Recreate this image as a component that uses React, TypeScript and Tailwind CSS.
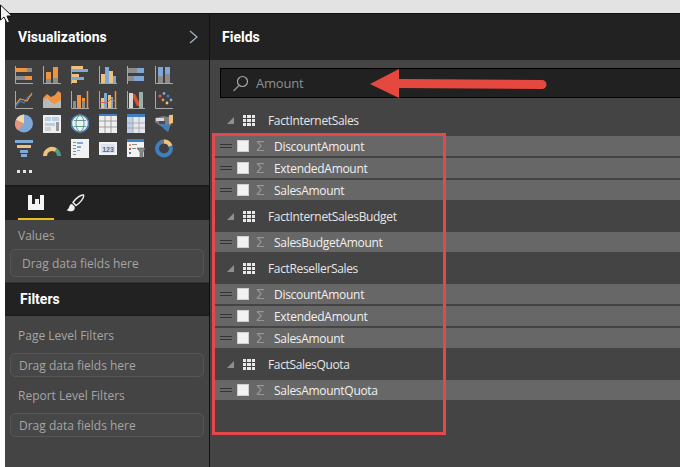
const OR = "#ee9440";
const BL = "#7ea8d6";
const TN = "#eec27c";
const GR = "#8c8c8c";
const AX = "#a8a8a8";
const DB = "#3f7fbf";

const Axes = () => <path d="M0.5 1V18.5H18" fill="none" stroke={AX} strokeWidth="1" />;
const R = (x: number, y: number, w: number, h: number, c: string) => <rect x={x} y={y} width={w} height={h} fill={c} />;

const vizIcons = [
  <><path d="M0.5 1V18.5H18" fill="none" stroke={AX} />{R(1, 3, 11, 4, OR)}{R(12, 3, 5, 4, GR)}{R(1, 11, 9, 4, GR)}{R(10, 11, 7, 4, OR)}</>,
  <><Axes />{R(3, 7, 5, 7, OR)}{R(3, 14, 5, 4, GR)}{R(10, 2, 5, 11, OR)}{R(10, 13, 5, 5, GR)}</>,
  <><path d="M0.5 1V19" stroke={AX} />{R(1, 1, 11, 3, TN)}{R(1, 4, 16, 3, BL)}{R(1, 9, 7, 3, TN)}{R(1, 12, 12, 3, BL)}{R(1, 15, 5, 3, TN)}</>,
  <><Axes />{R(2, 9, 4, 9, TN)}{R(6, 2, 4, 16, BL)}{R(10, 6, 4, 12, TN)}{R(14, 11, 3, 7, BL)}</>,
  <><path d="M0.5 1V19" stroke={AX} />{R(1, 3, 9, 5, GR)}{R(10, 3, 7, 5, BL)}{R(1, 11, 6, 5, GR)}{R(7, 11, 10, 5, BL)}</>,
  <><Axes />{R(3, 2, 5, 9, BL)}{R(3, 11, 5, 7, GR)}{R(10, 2, 5, 7, BL)}{R(10, 9, 5, 9, GR)}</>,
  <><Axes /><path d="M1 16L5 11L9 13L13 7L17 5" fill="none" stroke={DB} strokeWidth="1.3" /><path d="M1 14L5 9L9 10L12 11L17 3" fill="none" stroke={OR} strokeWidth="1.2" /></>,
  <><path d="M0 18V8L4 4L8 7L12 5L15 1L18 3V18Z" fill={OR} /><path d="M0 18V11L4 8L8 12L12 14L18 10V18Z" fill="#b9b9b9" /></>,
  <><Axes />{R(2, 11, 3, 7, GR)}{R(6, 5, 4, 13, OR)}{R(11, 11, 3, 7, GR)}{R(11, 8, 3, 3, OR)}<path d="M16.5 1V18" stroke={OR} strokeWidth="1.5" /></>,
  <><Axes />{R(2, 8, 3, 10, TN)}{R(5, 3, 3, 15, BL)}{R(9, 5, 3, 13, TN)}{R(12, 7, 2, 11, BL)}<path d="M1 12L8 13L12 9L16 11" fill="none" stroke="#e0574f" /><path d="M16.5 1V18" stroke={OR} strokeWidth="1.5" /></>,
  <><Axes />{R(2, 3, 4, 15, "#d8d8d8")}{R(12, 2, 4, 16, "#9bb0a8")}<path d="M6 4H8L12 12V16H10L6 8Z" fill="#d9512f" /></>,
  <><Axes /><circle cx="5" cy="6" r="1.6" fill="#d65a4e" /><circle cx="9" cy="3.5" r="1.4" fill={BL} /><circle cx="13" cy="6" r="1.5" fill={DB} /><circle cx="8" cy="10" r="1.4" fill={OR} /><circle cx="12" cy="13" r="1.4" fill={TN} /><circle cx="16" cy="10" r="1.4" fill={BL} /></>,
  <><circle cx="9" cy="9.5" r="9" fill={BL} /><path d="M9 9.5V0.5A9 9 0 0 0 1 6Z" fill="#f3d9a4" /><path d="M9 9.5L1 6A9 9 0 0 0 3 16.5Z" fill="#e6937f" /></>,
  <>{R(0, 1, 18, 18, "#eeeeee")}{R(2, 3, 6, 4, "#b9cde3")}{R(9, 3, 7, 4, "#b9cde3")}{R(2, 9, 10, 3, "#b9cde3")}{R(13, 8, 3, 9, "#9a9a9a")}{R(2, 13, 6, 4, "#cfcfcf")}</>,
  <><circle cx="9" cy="9.5" r="9" fill="#f0f0f0" /><circle cx="9" cy="9.5" r="8.5" fill="none" stroke={DB} strokeWidth="1.4" /><path d="M3 6.5H15M3 12.5H15" stroke="#5f9a8a" strokeWidth="1.2" /><ellipse cx="9" cy="9.5" rx="4" ry="8" fill="none" stroke="#5f9a8a" /></>,
  <>{R(0, 0, 18, 19, "#eeeeee")}{R(0, 0, 18, 2, DB)}<path d="M6 2V19M12 2V19M0 7H18M0 13H18" stroke="#8d8d8d" strokeWidth="0.8" /></>,
  <>{R(0, 0, 18, 19, "#e4e8ee")}{R(0, 0, 18, 3, DB)}{R(0, 3, 6, 16, "#bcd0e6")}<path d="M6 3V19M12 3V19M0 9H18M0 14H18" stroke="#9a9a9a" strokeWidth="0.7" /></>,
  <><path d="M0 4L8 2L13 3L18 0V8L15 12L13 18L9 14L4 11L0 8Z" fill="#7d7d7d" />{R(1, 4, 8, 3, "#d8d8d8")}<path d="M14 1H18V9L14 10Z" fill={TN} /><path d="M5 10L14 11L13 18L9 15Z" fill={DB} />{R(4, 7, 6, 3, "#3d4f66")}</>,
  <>{R(0, 1, 18, 3, BL)}{R(2, 6, 14, 3, TN)}{R(5, 11, 8, 3, BL)}{R(6, 15, 6, 3, BL)}</>,
  <><path d="M2 17A7 7 0 0 1 13 11.2" fill="none" stroke={TN} strokeWidth="4" /><path d="M13 11.2A7 7 0 0 1 16 17" fill="none" stroke="#4f9c8a" strokeWidth="4" /></>,
  <>{R(0, 0, 18, 19, "#f2f2f2")}{R(2, 3, 3, 1, GR)}{R(2, 6, 3, 1, GR)}{R(2, 9, 3, 1, GR)}{R(2, 12, 3, 1, GR)}{R(2, 15, 3, 1, GR)}{R(6, 3, 6, 2, BL)}{R(6, 7, 4, 2, BL)}{R(6, 11, 3, 1, BL)}</>,
  <>{R(0, 3, 18, 13, "#f2f2f2")}{R(2, 5, 14, 9, "#dbe3ec")}<text x="9" y="12.5" textAnchor="middle" fontSize="7" fontWeight="700" fontFamily="Liberation Sans, sans-serif" fill="#3f6f9f">123</text></>,
  <>{R(0, 0, 17, 18, "#f2f2f2")}{R(0, 0, 17, 3, DB)}{R(2, 5, 2, 2, OR)}{R(2, 9, 2, 2, "#d9512f")}{R(2, 13, 2, 2, DB)}{R(5, 5, 5, 1, GR)}{R(5, 9, 4, 1, GR)}<path d="M10 9H19L16 13V18L13 19V13Z" fill="#8a8a8a" stroke="#444" strokeWidth="0.5" /></>,
  <><circle cx="9" cy="9.5" r="7" fill="none" stroke={DB} strokeWidth="4" /><path d="M9 2.5A7 7 0 0 1 15.5 7" fill="none" stroke={TN} strokeWidth="4" /><path d="M9 2.5A7 7 0 0 0 6 3.2" fill="none" stroke="#777" strokeWidth="4" /></>,
];

const SectionHead = ({ children }: { children: string }) => (
  <div className="h-[33px] bg-[#222222] flex items-center pl-[15px] border-y border-[#1b1b1b] text-white text-[14px] font-bold font-['Roboto',sans-serif]">
    {children}
  </div>
);

const DropBox = ({ h, pl }: { h: string; pl: string }) => (
  <div className={`mx-[5px] rounded-[5px] border border-[#565656] bg-[#474747] flex items-center pt-[1px] text-[12px] text-[#a5a5a5] ${h} ${pl}`}>
    Drag data fields here
  </div>
);

const TableHead = ({ name }: { name: string }) => (
  <div className="h-[30px] pb-[2px] flex items-center">
    <svg width="7" height="7" viewBox="0 0 7 7" className="ml-[17px]"><path d="M7 0V7H0Z" fill="#8f8f8f" /></svg>
    <div className="ml-[9px] w-[12px] h-[11px] grid grid-cols-3 gap-[1px]">
      {Array.from({ length: 9 }).map((_, i) => <div key={i} className="bg-[#e8e8e8]" />)}
    </div>
    <span className="ml-[13px] pt-[1px] text-[12px] tracking-[-0.35px] text-[#e6e6e6]">{name}</span>
  </div>
);

const FieldRow = ({ name }: { name: string }) => (
  <div className="h-[20px] mb-[2px] ml-[5px] bg-[#676767] flex items-center">
    <div className="ml-[5px] w-[12px] flex flex-col gap-[2px]">
      <div className="h-px bg-[#333333]" />
      <div className="h-px bg-[#333333]" />
    </div>
    <div className="ml-[5px] w-[12px] h-[12px] bg-[#f2f2f2] border border-[#cfcfcf]" />
    <span className="ml-[7px] w-[11px] text-[14px] leading-none text-[#979797] font-['Liberation_Sans',sans-serif]">Σ</span>
    <span className="ml-[7px] pt-[1px] text-[12px] tracking-[-0.3px] text-[#f0f0f0]">{name}</span>
  </div>
);

const groups = [
  { name: "FactInternetSales", fields: ["DiscountAmount", "ExtendedAmount", "SalesAmount"] },
  { name: "FactInternetSalesBudget", fields: ["SalesBudgetAmount"] },
  { name: "FactResellerSales", fields: ["DiscountAmount", "ExtendedAmount", "SalesAmount"] },
  { name: "FactSalesQuota", fields: ["SalesAmountQuota"] },
];

export default function App() {
  return (
    <div className="relative w-[680px] h-[467px] overflow-hidden bg-white font-['Open_Sans',sans-serif]">
      <div className="h-[13px] bg-[#e3e3e3]" />
      <div className="flex h-[454px]">
        <div className="w-[5px] bg-white" />

        <aside className="w-[204px] bg-[#444444] border-t border-[#111111]">
          <div className="h-[46px] bg-[#222222] flex items-center justify-between pl-[13px] pr-[11px] text-white text-[14px] font-bold font-['Roboto',sans-serif]">
            <span>Visualizations</span>
            <svg width="9" height="14" viewBox="0 0 9 14"><path d="M1 1L8 7L1 13" fill="none" stroke="#9fb0c0" strokeWidth="1.3" /></svg>
          </div>
          <div className="h-[125px] bg-[#3f3f3f] pl-[10px] pt-[5px]">
            <div className="grid grid-cols-[repeat(6,18px)] auto-rows-[19px] gap-x-[10px] gap-y-[5.5px]">
              {vizIcons.map((icon, i) => (
                <svg key={i} width="18" height="19" viewBox="0 0 18 19">{icon}</svg>
              ))}
            </div>
            <div className="flex gap-[3px] mt-[12px] ml-[2px]">
              <div className="w-[3px] h-[3px] bg-[#e4e4e4]" />
              <div className="w-[3px] h-[3px] bg-[#e4e4e4]" />
              <div className="w-[3px] h-[3px] bg-[#e4e4e4]" />
            </div>
          </div>
          <div className="h-[2px] bg-[#1b1b1b]" />
          <div className="h-[33px] bg-[#222222] flex items-center pl-[13px]">
            <div className="w-[36px] h-[33px] flex items-center justify-center border-b-2 border-[#e8c020]">
              <svg width="16" height="15" viewBox="0 0 16 15"><path d="M0 0H4V9H7V4H11V9H12V0H16V15H0Z" fill="#f5f5f5" /></svg>
            </div>
            <svg width="19" height="19" viewBox="0 0 19 19" className="ml-[12px]">
              <path d="M17.5 1C15 0.5 10 4 7 8.5L10 11.5C14 9 18.5 4 17.5 1Z" fill="none" stroke="#f2f2f2" strokeWidth="1.4" />
              <path d="M6 10C2.5 10 4 15 0.5 16C4 18.5 10 17.5 8.5 12.5Z" fill="#f2f2f2" />
            </svg>
          </div>
          <div className="h-[63px] border-b border-[#333333]">
            <div className="pl-[13px] pt-[7px] h-[29px] text-[12px] text-[#a5a5a5]">Values</div>
            <DropBox h="h-[28px]" pl="pl-[11px]" />
          </div>
          <SectionHead>Filters</SectionHead>
          <div className="pl-[13px] pt-[11px] h-[37px] text-[12px] text-[#a5a5a5]">Page Level Filters</div>
          <DropBox h="h-[24px]" pl="pl-[8px]" />
          <div className="pl-[13px] pt-[10px] h-[36px] text-[12px] text-[#a5a5a5]">Report Level Filters</div>
          <DropBox h="h-[24px]" pl="pl-[8px]" />
        </aside>

        <div className="w-px bg-[#111111]" />

        <main className="flex-1 bg-[#444444] border-t border-[#111111]">
          <div className="h-[46px] bg-[#222222] flex items-center pl-[12px] text-white text-[14px] font-bold font-['Roboto',sans-serif]">
            Fields
          </div>
          <div className="h-[46px] pt-[8px] pl-[10px]">
            <div className="h-[30px] bg-[#212121] border border-black border-r-0 flex items-center pl-[11px]">
              <svg width="17" height="17" viewBox="0 0 17 17">
                <circle cx="10.5" cy="6.5" r="5" fill="none" stroke="#a8a8a8" strokeWidth="1.2" />
                <path d="M7 10.5L1.5 16" stroke="#8a8a8a" strokeWidth="1.6" />
              </svg>
              <span className="ml-[7px] pt-[2px] text-[13px] tracking-[-0.2px] text-[#8f8f8f]">Amount</span>
            </div>
          </div>
          <div>
            {groups.map((g) => (
              <div key={g.name}>
                <TableHead name={g.name} />
                {g.fields.map((f) => <FieldRow key={f} name={f} />)}
              </div>
            ))}
          </div>
        </main>
      </div>

      {/* annotations drawn on top of the screenshot */}
      <div className="absolute left-[212px] top-[133px] w-[234px] h-[302px] border-[3px] border-[#e5484a]" />
      <svg className="absolute left-[368px] top-[66px]" width="182" height="36" viewBox="0 0 182 36">
        <path d="M2 18L31 3V13L174 14A4.5 4.5 0 0 1 174 23L31 22V32Z" fill="#e5483f" />
      </svg>
      <svg className="absolute left-0 top-[4px]" width="13" height="20" viewBox="0 0 13 20">
        <path d="M0.5 1V16L4 13L7 19L9.5 18L7 12L12 12Z" fill="#f4f4f4" stroke="#111111" strokeWidth="1" />
      </svg>
    </div>
  );
}
